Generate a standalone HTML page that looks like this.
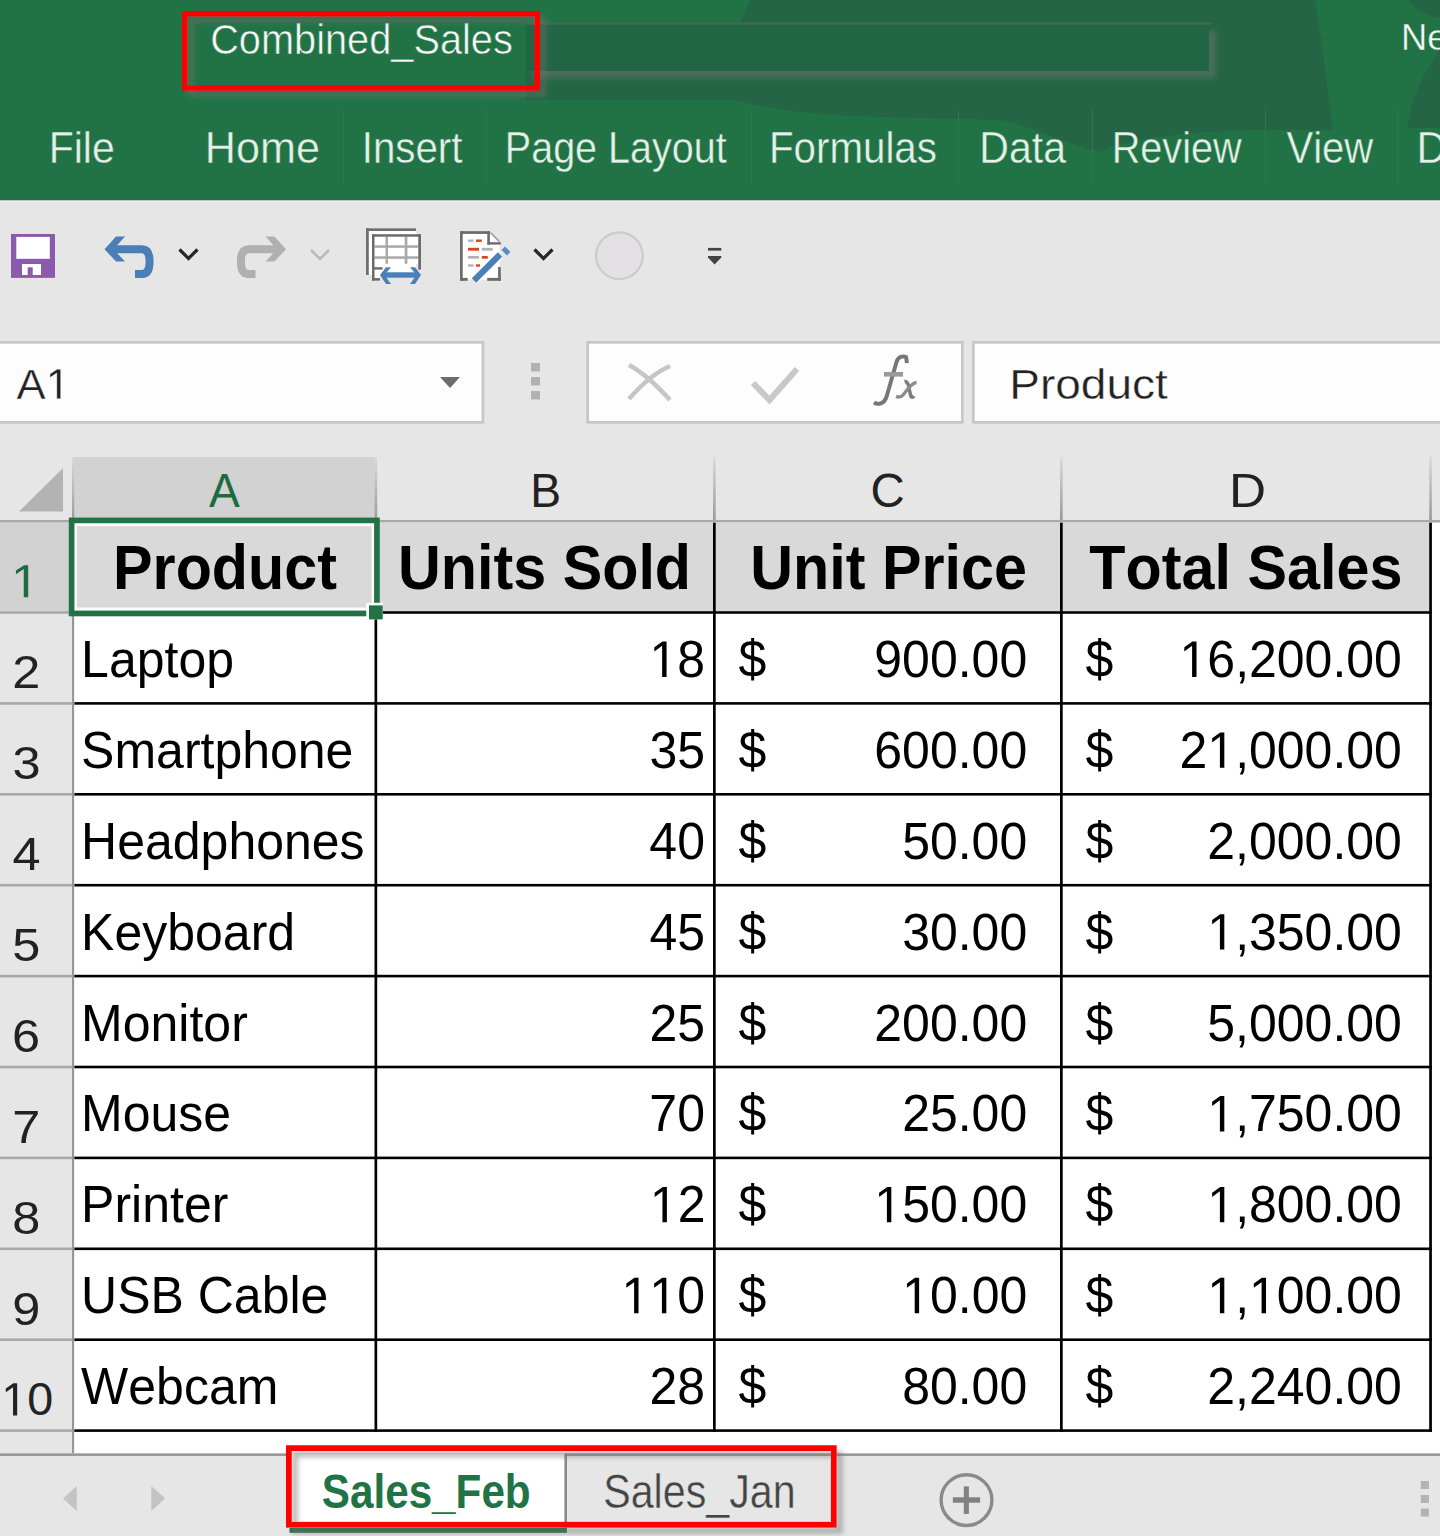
<!DOCTYPE html><html><head><meta charset="utf-8"><title>Combined_Sales - Excel</title><style>html,body{margin:0;padding:0;width:1440px;height:1536px;overflow:hidden;background:#e6e6e6}svg{display:block}text{font-family:"Liberation Sans",sans-serif;font-kerning:none;white-space:pre}</style></head><body>
<svg width="1440" height="1536" viewBox="0 0 1440 1536">
<defs>
<filter id="sh" x="-10%" y="-30%" width="130%" height="180%"><feGaussianBlur in="SourceAlpha" stdDeviation="2.8"/><feOffset dx="6" dy="6" result="b"/><feFlood flood-color="#707070" flood-opacity="0.5"/><feComposite in2="b" operator="in"/><feMerge><feMergeNode/><feMergeNode in="SourceGraphic"/></feMerge></filter>
<filter id="sh2" x="-10%" y="-30%" width="130%" height="180%"><feGaussianBlur in="SourceAlpha" stdDeviation="3.2"/><feOffset dx="7" dy="7" result="b"/><feFlood flood-color="#7a7a7a" flood-opacity="0.45"/><feComposite in2="b" operator="in"/><feMerge><feMergeNode/><feMergeNode in="SourceGraphic"/></feMerge></filter>
<linearGradient id="colsep" x1="0" y1="0" x2="0" y2="1"><stop offset="0" stop-color="#dadada"/><stop offset="1" stop-color="#9a9a9a"/></linearGradient>
</defs>
<rect x="0.00" y="0.00" width="1440.00" height="200.50" fill="#217346"/>
<path d="M526 22 L740 22 C745 10 748 5 750 0 L1315 0 C1322 40 1327 90 1333 130 L1250 130 C1180 132 1120 140 1100 152 C1060 142 1030 125 1000 120 C950 118 850 118 800 112 C770 108 750 104 734 100 L526 100 Z" fill="#236544"/>
<path d="M1440 50 C1425 70 1410 100 1408 128 L1440 128 Z" fill="#236544"/>
<path d="M1408 0 L1440 0 L1440 18 C1425 15 1412 8 1408 0 Z" fill="#236544"/>
<g filter="url(#sh2)"><rect x="526" y="23.5" width="683" height="47.5" fill="#236544"/></g>
<rect x="526.00" y="22.30" width="686.00" height="2.60" fill="#3f6a53"/>
<rect x="0.00" y="200.50" width="1440.00" height="1.50" fill="#ece8ea"/>
<text transform="translate(210.18 54.20) scale(0.9237 1)" font-size="43.02" fill="#f7f9f8" stroke="#217346" stroke-width="0.6">Combined_Sales</text>
<text transform="translate(1401.02 50.00) scale(1.0000 1)" font-size="36.34" fill="#f7f9f8" stroke="#217346" stroke-width="0.35">Ne</text>
<text transform="translate(48.63 162.60) scale(0.9297 1)" font-size="44.19" fill="#e4f0e8" stroke="#217346" stroke-width="0.4">File</text>
<text transform="translate(204.76 162.60) scale(0.9770 1)" font-size="44.19" fill="#e4f0e8" stroke="#217346" stroke-width="0.4">Home</text>
<text transform="translate(361.68 162.60) scale(0.9123 1)" font-size="44.19" fill="#e4f0e8" stroke="#217346" stroke-width="0.4">Insert</text>
<text transform="translate(504.76 162.60) scale(0.8952 1)" font-size="44.19" fill="#e4f0e8" stroke="#217346" stroke-width="0.4">Page Layout</text>
<text transform="translate(768.99 162.60) scale(0.9121 1)" font-size="44.19" fill="#e4f0e8" stroke="#217346" stroke-width="0.4">Formulas</text>
<text transform="translate(979.33 162.60) scale(0.9285 1)" font-size="44.19" fill="#e4f0e8" stroke="#217346" stroke-width="0.4">Data</text>
<text transform="translate(1111.75 162.60) scale(0.8963 1)" font-size="44.19" fill="#e4f0e8" stroke="#217346" stroke-width="0.4">Review</text>
<text transform="translate(1286.52 162.60) scale(0.9050 1)" font-size="44.19" fill="#e4f0e8" stroke="#217346" stroke-width="0.4">View</text>
<text transform="translate(1416.56 162.60) scale(0.9500 1)" font-size="44.19" fill="#e4f0e8" stroke="#217346" stroke-width="0.4">D</text>
<rect x="343.00" y="110.00" width="1.00" height="75.00" fill="#2a7a4f"/>
<rect x="486.00" y="110.00" width="1.00" height="75.00" fill="#2a7a4f"/>
<rect x="751.00" y="110.00" width="1.00" height="75.00" fill="#2a7a4f"/>
<rect x="958.00" y="110.00" width="1.00" height="75.00" fill="#2a7a4f"/>
<rect x="1092.00" y="110.00" width="1.00" height="75.00" fill="#2a7a4f"/>
<rect x="1265.00" y="110.00" width="1.00" height="75.00" fill="#2a7a4f"/>
<rect x="1397.00" y="110.00" width="1.00" height="75.00" fill="#2a7a4f"/>
<g filter="url(#sh)"><rect x="184.75" y="13.75" width="352.5" height="74.2" fill="none" stroke="#ff0000" stroke-width="5.6"/></g>
<rect x="0.00" y="202.00" width="1440.00" height="255.00" fill="#e6e6e6"/>
<g id="qat">
<!-- save -->
<rect x="11" y="234" width="44" height="43.9" fill="#8b5aad"/>
<rect x="16.3" y="236.9" width="33.5" height="21.9" fill="#ffffff"/>
<rect x="22" y="264" width="19" height="11" fill="#ffffff"/>
<rect x="27.7" y="267.3" width="5" height="7.7" fill="#8b5aad"/>
<!-- undo -->
<g id="undo" fill="#4a7fb8">
<path d="M116 236.5 L125 236.5 L113.5 249.2 L125 261.5 L116 261.5 L104.5 249.2 Z"/>
<path d="M108 249.2 L142 249.2 C147.5 249.2 149.6 253.5 149.6 261.5 C149.6 269.5 147.5 274 142 274 L135 274" fill="none" stroke="#4a7fb8" stroke-width="8"/>
</g>
<path d="M179.5 249.5 L188.5 258.5 L197.5 249.5" fill="none" stroke="#262626" stroke-width="3.2"/>
<!-- redo -->
<g transform="translate(390.5 0) scale(-1 1)" fill="#b0b0b0">
<path d="M116 236.5 L125 236.5 L113.5 249.2 L125 261.5 L116 261.5 L104.5 249.2 Z"/>
<path d="M108 249.2 L142 249.2 C147.5 249.2 149.6 253.5 149.6 261.5 C149.6 269.5 147.5 274 142 274 L135 274" fill="none" stroke="#b0b0b0" stroke-width="8"/>
</g>
<path d="M311 250 L320 259 L329 250" fill="none" stroke="#b9b9b9" stroke-width="2.5"/>
<!-- table icon -->
<rect x="366" y="228.3" width="50" height="47" fill="#ffffff"/>
<rect x="366" y="228.3" width="50" height="2.7" fill="#707070"/>
<rect x="366" y="228.3" width="2.8" height="46.7" fill="#707070"/>
<rect x="368.8" y="275" width="3.2" height="3" fill="#e6e6e6"/>
<rect x="374.5" y="236.6" width="43.8" height="27.4" fill="#ffffff"/>
<rect x="374.5" y="264" width="10.5" height="3.2" fill="#ffffff"/>
<rect x="374.5" y="269.6" width="5.5" height="8.5" fill="#ffffff"/>
<rect x="374.5" y="245.3" width="43.8" height="2.5" fill="#a9a9a9"/>
<rect x="374.5" y="256.3" width="43.8" height="2.5" fill="#a9a9a9"/>
<rect x="385.5" y="236.6" width="2.5" height="27.2" fill="#a9a9a9"/>
<rect x="404.7" y="236.6" width="2.7" height="27.2" fill="#a9a9a9"/>
<g fill="#6b6b6b">
<rect x="372" y="234.2" width="49" height="2.5"/>
<rect x="372" y="234.2" width="2.5" height="46.4"/>
<rect x="418.3" y="234.2" width="2.7" height="35.4"/>
<rect x="372" y="267.2" width="10.6" height="2.4"/>
<rect x="372" y="278.1" width="8" height="2.5"/>
</g>
<g fill="#4a7fb8">
<rect x="382" y="272.3" width="37" height="5.4"/>
<path d="M380 275 L386 267.2 L391 267.2 L384.5 275 L391 283.9 L386 283.9 Z"/>
<path transform="translate(801 0) scale(-1 1)" d="M380 275 L386 267.2 L391 267.2 L384.5 275 L391 283.9 L386 283.9 Z"/>
</g>
<!-- doc + pencil -->
<path d="M461.3 232.5 L488.6 232.5 L499.5 243.4 L499.5 279.5 L461.3 279.5 Z" fill="#ffffff"/>
<g fill="#6b6b6b">
<rect x="460" y="231.2" width="29.9" height="2.7"/>
<rect x="460" y="231.2" width="2.7" height="49.6"/>
<rect x="487.3" y="231.2" width="2.6" height="13.4"/>
<rect x="487.3" y="242.2" width="13.5" height="2.4"/>
<rect x="498.1" y="267" width="2.7" height="13.8"/>
<rect x="460" y="277.9" width="7.7" height="2.9"/>
<rect x="487.2" y="277.9" width="13.6" height="2.9"/>
</g>
<path d="M490.5 232.5 L499.5 241.5" stroke="#9a9a9a" stroke-width="1.4"/>
<g fill="#b3b3b3">
<rect x="468" y="239.5" width="5.6" height="2.4"/>
<rect x="481.8" y="247.8" width="11" height="2.9"/>
<rect x="468" y="256" width="11" height="2.7"/>
<rect x="468" y="264.3" width="5.6" height="2.4"/>
</g>
<g fill="#d9461e">
<rect x="476" y="239.5" width="5.8" height="2.4"/>
<rect x="468" y="247.8" width="11" height="2.9"/>
<rect x="481.8" y="256" width="6" height="2.7"/>
<rect x="476" y="264.3" width="4" height="2.4"/>
</g>
<path d="M474 280.5 L500 254.5" stroke="#ffffff" stroke-width="9" opacity="0.85"/>
<path d="M474 280.5 L500 254.5" stroke="#4a7fb8" stroke-width="6.2"/>
<path d="M501.5 250 L507 255.5 L510.5 252 L505 246.5 Z" fill="#5a8bc2"/>
<path d="M534.5 249.5 L543.5 258.5 L552.5 249.5" fill="none" stroke="#262626" stroke-width="3.2"/>
<!-- circle -->
<circle cx="619.4" cy="255.7" r="23.4" fill="#e4e0e3" stroke="#cbcbcb" stroke-width="2.2"/>
<!-- customize -->
<rect x="708" y="247.9" width="13.3" height="2.7" fill="#444"/>
<path d="M708 256 L721.3 256 L721.3 257.5 L714.6 264.5 L708 257.5 Z" fill="#444"/>
</g>

<rect x="-5.00" y="342.35" width="487.90" height="80.00" fill="#fdfdfd" stroke="#c6c6c6" stroke-width="2.7"/>
<g transform="translate(16.61 398.70) scale(1.0240 1)" fill="#222" stroke="#fdfdfd" stroke-width="0.4"><text x="0.00" font-size="42.73">A</text><path transform="translate(28.50 0) scale(0.02087 -0.02087)" stroke-width="19.2" d="M515 0V1237L197 1010V1180L530 1409H696V0Z"/></g>
<path d="M440 377 L460 377 L450 388 Z" fill="#6d6d6d"/>
<rect x="531.00" y="363.00" width="9.00" height="8.50" fill="#b1b1b1"/>
<rect x="531.00" y="377.00" width="9.00" height="8.50" fill="#b1b1b1"/>
<rect x="531.00" y="391.00" width="9.00" height="8.50" fill="#b1b1b1"/>
<rect x="587.70" y="342.35" width="374.60" height="80.00" fill="#fdfdfd" stroke="#c6c6c6" stroke-width="2.7"/>
<rect x="973.35" y="342.35" width="600.00" height="80.00" fill="#fdfdfd" stroke="#c6c6c6" stroke-width="2.7"/>
<text transform="translate(1009.22 398.70) scale(1.0697 1)" font-size="43.02" fill="#222" stroke="#fdfdfd" stroke-width="0.4">Product</text>
<g id="fxbtns">
<path d="M629 365 C640 371 652 380 670 400 M670 366 C656 372 642 384 629 399" fill="none" stroke="#c6c6c6" stroke-width="4.6"/>
<path d="M753 383 L769.5 400 L797 369" fill="none" stroke="#c8c8c8" stroke-width="6"/>
</g>

<path d="M874 402.5 C878 405 884 404 886.5 397 L896.5 362 C898 357 902 355.5 906 357 L907 363" fill="none" stroke="#777777" stroke-width="4"/>
<rect x="884.00" y="372.00" width="19.00" height="4.60" fill="#9a9a9a"/>
<path d="M904.5 381.5 C907 381 908.5 384 909 388 L910.5 395 C911 398 913 397.5 914 396" fill="none" stroke="#7c7c7c" stroke-width="3.5"/>
<path d="M916.5 382.5 C913 383 910 386 907 390 L903 395 C901 397.5 899 397.5 896 396.5" fill="none" stroke="#8c8c8c" stroke-width="3.3"/>
<rect x="0.00" y="457.00" width="1440.00" height="63.00" fill="#e6e6e6"/>
<rect x="74.20" y="457.00" width="300.30" height="63.00" fill="#d2d2d2"/>
<path d="M63 468 L63 511.6 L19 511.6 Z" fill="#b3b3b3"/>
<rect x="374.50" y="457.00" width="2.70" height="63.00" fill="url(#colsep)"/>
<rect x="713.00" y="457.00" width="2.70" height="63.00" fill="url(#colsep)"/>
<rect x="1060.00" y="457.00" width="2.70" height="63.00" fill="url(#colsep)"/>
<rect x="1429.20" y="457.00" width="2.70" height="63.00" fill="url(#colsep)"/>
<rect x="72.00" y="457.00" width="2.30" height="63.00" fill="url(#colsep)"/>
<rect x="0.00" y="520.00" width="1440.00" height="2.70" fill="#a9a9a9"/>
<rect x="0.00" y="522.70" width="72.00" height="930.70" fill="#e6e6e6"/>
<rect x="0.00" y="522.70" width="72.00" height="88.50" fill="#d2d2d2"/>
<rect x="0.00" y="611.20" width="72.00" height="2.60" fill="#a8a8a8"/>
<rect x="0.00" y="702.10" width="72.00" height="2.60" fill="#a8a8a8"/>
<rect x="0.00" y="793.00" width="72.00" height="2.60" fill="#a8a8a8"/>
<rect x="0.00" y="883.90" width="72.00" height="2.60" fill="#a8a8a8"/>
<rect x="0.00" y="974.80" width="72.00" height="2.60" fill="#a8a8a8"/>
<rect x="0.00" y="1065.70" width="72.00" height="2.60" fill="#a8a8a8"/>
<rect x="0.00" y="1156.60" width="72.00" height="2.60" fill="#a8a8a8"/>
<rect x="0.00" y="1247.50" width="72.00" height="2.60" fill="#a8a8a8"/>
<rect x="0.00" y="1338.40" width="72.00" height="2.60" fill="#a8a8a8"/>
<rect x="0.00" y="1429.30" width="72.00" height="2.60" fill="#a8a8a8"/>
<rect x="72.00" y="522.70" width="2.30" height="930.70" fill="#969696"/>
<rect x="74.30" y="522.70" width="1365.70" height="930.70" fill="#ffffff"/>
<rect x="74.30" y="522.70" width="1354.90" height="88.50" fill="#d9d9d9"/>
<rect x="74.30" y="611.20" width="1357.60" height="2.60" fill="#000"/>
<rect x="74.30" y="702.10" width="1357.60" height="2.60" fill="#000"/>
<rect x="74.30" y="793.00" width="1357.60" height="2.60" fill="#000"/>
<rect x="74.30" y="883.90" width="1357.60" height="2.60" fill="#000"/>
<rect x="74.30" y="974.80" width="1357.60" height="2.60" fill="#000"/>
<rect x="74.30" y="1065.70" width="1357.60" height="2.60" fill="#000"/>
<rect x="74.30" y="1156.60" width="1357.60" height="2.60" fill="#000"/>
<rect x="74.30" y="1247.50" width="1357.60" height="2.60" fill="#000"/>
<rect x="74.30" y="1338.40" width="1357.60" height="2.60" fill="#000"/>
<rect x="74.30" y="1429.30" width="1357.60" height="2.60" fill="#000"/>
<rect x="374.50" y="522.70" width="2.70" height="909.20" fill="#000"/>
<rect x="713.00" y="522.70" width="2.70" height="909.20" fill="#000"/>
<rect x="1060.00" y="522.70" width="2.70" height="909.20" fill="#000"/>
<rect x="1429.20" y="522.70" width="2.70" height="909.20" fill="#000"/>
<text transform="translate(208.91 506.70) scale(0.9563 1)" font-size="48.26" fill="#1e6b40">A</text>
<text transform="translate(530.21 506.70) scale(0.9578 1)" font-size="48.26" fill="#222">B</text>
<text transform="translate(870.59 506.70) scale(0.9816 1)" font-size="48.26" fill="#222">C</text>
<text transform="translate(1229.09 506.70) scale(1.0636 1)" font-size="48.26" fill="#222">D</text>
<g transform="translate(11.08 597.30) scale(1.0800 1)" fill="#1e6b40"><path transform="translate(0.00 0) scale(0.02280 -0.02280)" d="M515 0V1237L197 1010V1180L530 1409H696V0Z"/></g>
<text transform="translate(12.28 688.20) scale(1.0800 1)" font-size="46.69" fill="#222">2</text>
<text transform="translate(12.43 779.10) scale(1.0800 1)" font-size="46.69" fill="#222">3</text>
<text transform="translate(12.44 870.00) scale(1.0800 1)" font-size="46.69" fill="#222">4</text>
<text transform="translate(12.33 960.90) scale(1.0800 1)" font-size="46.69" fill="#222">5</text>
<text transform="translate(12.11 1051.80) scale(1.0800 1)" font-size="46.69" fill="#222">6</text>
<text transform="translate(12.25 1142.70) scale(1.0800 1)" font-size="46.69" fill="#222">7</text>
<text transform="translate(12.28 1233.60) scale(1.0800 1)" font-size="46.69" fill="#222">8</text>
<text transform="translate(12.29 1324.50) scale(1.0800 1)" font-size="46.69" fill="#222">9</text>
<g transform="translate(1.30 1415.40) scale(1.0000 1)" fill="#222"><path transform="translate(0.00 0) scale(0.02280 -0.02280)" d="M515 0V1237L197 1010V1180L530 1409H696V0Z"/><text x="25.97" font-size="46.69">0</text></g>
<text transform="translate(113.03 588.90) scale(0.9357 1)" font-size="63.37" fill="#000" font-weight="bold">Product</text>
<text transform="translate(397.94 588.90) scale(0.9357 1)" font-size="63.37" fill="#000" font-weight="bold">Units Sold</text>
<text transform="translate(750.24 588.90) scale(0.9357 1)" font-size="63.37" fill="#000" font-weight="bold">Unit Price</text>
<text transform="translate(1089.33 588.90) scale(0.9357 1)" font-size="63.37" fill="#000" font-weight="bold">Total Sales</text>
<text transform="translate(81.10 676.90) scale(0.9718 1)" font-size="51.45" fill="#000">Laptop</text>
<g transform="translate(649.56 676.90) scale(0.9718 1)" fill="#000"><path transform="translate(0.00 0) scale(0.02512 -0.02512)" d="M515 0V1237L197 1010V1180L530 1409H696V0Z"/><text x="28.62" font-size="51.45">8</text></g>
<text transform="translate(738.46 676.90) scale(0.9718 1)" font-size="51.45" fill="#000">$</text>
<text transform="translate(874.32 676.90) scale(0.9718 1)" font-size="51.45" fill="#000">900.00</text>
<text transform="translate(1085.46 676.90) scale(0.9718 1)" font-size="51.45" fill="#000">$</text>
<g transform="translate(1179.52 676.90) scale(0.9718 1)" fill="#000"><path transform="translate(0.00 0) scale(0.02512 -0.02512)" d="M515 0V1237L197 1010V1180L530 1409H696V0Z"/><text x="28.62" font-size="51.45">6,200.00</text></g>
<text transform="translate(81.10 767.80) scale(0.9718 1)" font-size="51.45" fill="#000">Smartphone</text>
<text transform="translate(649.48 767.80) scale(0.9718 1)" font-size="51.45" fill="#000">35</text>
<text transform="translate(738.46 767.80) scale(0.9718 1)" font-size="51.45" fill="#000">$</text>
<text transform="translate(874.32 767.80) scale(0.9718 1)" font-size="51.45" fill="#000">600.00</text>
<text transform="translate(1085.46 767.80) scale(0.9718 1)" font-size="51.45" fill="#000">$</text>
<g transform="translate(1179.52 767.80) scale(0.9718 1)" fill="#000"><text x="0.00" font-size="51.45">2</text><path transform="translate(28.62 0) scale(0.02512 -0.02512)" d="M515 0V1237L197 1010V1180L530 1409H696V0Z"/><text x="57.23" font-size="51.45">,000.00</text></g>
<text transform="translate(81.10 858.70) scale(0.9718 1)" font-size="51.45" fill="#000">Headphones</text>
<text transform="translate(649.34 858.70) scale(0.9718 1)" font-size="51.45" fill="#000">40</text>
<text transform="translate(738.46 858.70) scale(0.9718 1)" font-size="51.45" fill="#000">$</text>
<text transform="translate(902.13 858.70) scale(0.9718 1)" font-size="51.45" fill="#000">50.00</text>
<text transform="translate(1085.46 858.70) scale(0.9718 1)" font-size="51.45" fill="#000">$</text>
<text transform="translate(1207.32 858.70) scale(0.9718 1)" font-size="51.45" fill="#000">2,000.00</text>
<text transform="translate(81.10 949.60) scale(0.9718 1)" font-size="51.45" fill="#000">Keyboard</text>
<text transform="translate(649.48 949.60) scale(0.9718 1)" font-size="51.45" fill="#000">45</text>
<text transform="translate(738.46 949.60) scale(0.9718 1)" font-size="51.45" fill="#000">$</text>
<text transform="translate(902.13 949.60) scale(0.9718 1)" font-size="51.45" fill="#000">30.00</text>
<text transform="translate(1085.46 949.60) scale(0.9718 1)" font-size="51.45" fill="#000">$</text>
<g transform="translate(1207.32 949.60) scale(0.9718 1)" fill="#000"><path transform="translate(0.00 0) scale(0.02512 -0.02512)" d="M515 0V1237L197 1010V1180L530 1409H696V0Z"/><text x="28.62" font-size="51.45">,350.00</text></g>
<text transform="translate(81.10 1040.50) scale(0.9718 1)" font-size="51.45" fill="#000">Monitor</text>
<text transform="translate(649.48 1040.50) scale(0.9718 1)" font-size="51.45" fill="#000">25</text>
<text transform="translate(738.46 1040.50) scale(0.9718 1)" font-size="51.45" fill="#000">$</text>
<text transform="translate(874.32 1040.50) scale(0.9718 1)" font-size="51.45" fill="#000">200.00</text>
<text transform="translate(1085.46 1040.50) scale(0.9718 1)" font-size="51.45" fill="#000">$</text>
<text transform="translate(1207.32 1040.50) scale(0.9718 1)" font-size="51.45" fill="#000">5,000.00</text>
<text transform="translate(81.10 1131.40) scale(0.9718 1)" font-size="51.45" fill="#000">Mouse</text>
<text transform="translate(649.34 1131.40) scale(0.9718 1)" font-size="51.45" fill="#000">70</text>
<text transform="translate(738.46 1131.40) scale(0.9718 1)" font-size="51.45" fill="#000">$</text>
<text transform="translate(902.13 1131.40) scale(0.9718 1)" font-size="51.45" fill="#000">25.00</text>
<text transform="translate(1085.46 1131.40) scale(0.9718 1)" font-size="51.45" fill="#000">$</text>
<g transform="translate(1207.32 1131.40) scale(0.9718 1)" fill="#000"><path transform="translate(0.00 0) scale(0.02512 -0.02512)" d="M515 0V1237L197 1010V1180L530 1409H696V0Z"/><text x="28.62" font-size="51.45">,750.00</text></g>
<text transform="translate(81.10 1222.30) scale(0.9718 1)" font-size="51.45" fill="#000">Printer</text>
<g transform="translate(649.90 1222.30) scale(0.9718 1)" fill="#000"><path transform="translate(0.00 0) scale(0.02512 -0.02512)" d="M515 0V1237L197 1010V1180L530 1409H696V0Z"/><text x="28.62" font-size="51.45">2</text></g>
<text transform="translate(738.46 1222.30) scale(0.9718 1)" font-size="51.45" fill="#000">$</text>
<g transform="translate(874.32 1222.30) scale(0.9718 1)" fill="#000"><path transform="translate(0.00 0) scale(0.02512 -0.02512)" d="M515 0V1237L197 1010V1180L530 1409H696V0Z"/><text x="28.62" font-size="51.45">50.00</text></g>
<text transform="translate(1085.46 1222.30) scale(0.9718 1)" font-size="51.45" fill="#000">$</text>
<g transform="translate(1207.32 1222.30) scale(0.9718 1)" fill="#000"><path transform="translate(0.00 0) scale(0.02512 -0.02512)" d="M515 0V1237L197 1010V1180L530 1409H696V0Z"/><text x="28.62" font-size="51.45">,800.00</text></g>
<text transform="translate(81.10 1313.20) scale(0.9718 1)" font-size="51.45" fill="#000">USB Cable</text>
<g transform="translate(621.53 1313.20) scale(0.9718 1)" fill="#000"><path transform="translate(0.00 0) scale(0.02512 -0.02512)" d="M515 0V1237L197 1010V1180L530 1409H696V0Z"/><path transform="translate(28.62 0) scale(0.02512 -0.02512)" d="M515 0V1237L197 1010V1180L530 1409H696V0Z"/><text x="57.23" font-size="51.45">0</text></g>
<text transform="translate(738.46 1313.20) scale(0.9718 1)" font-size="51.45" fill="#000">$</text>
<g transform="translate(902.13 1313.20) scale(0.9718 1)" fill="#000"><path transform="translate(0.00 0) scale(0.02512 -0.02512)" d="M515 0V1237L197 1010V1180L530 1409H696V0Z"/><text x="28.62" font-size="51.45">0.00</text></g>
<text transform="translate(1085.46 1313.20) scale(0.9718 1)" font-size="51.45" fill="#000">$</text>
<g transform="translate(1207.32 1313.20) scale(0.9718 1)" fill="#000"><path transform="translate(0.00 0) scale(0.02512 -0.02512)" d="M515 0V1237L197 1010V1180L530 1409H696V0Z"/><text x="28.62" font-size="51.45">,</text><path transform="translate(42.91 0) scale(0.02512 -0.02512)" d="M515 0V1237L197 1010V1180L530 1409H696V0Z"/><text x="71.53" font-size="51.45">00.00</text></g>
<text transform="translate(81.10 1404.10) scale(0.9718 1)" font-size="51.45" fill="#000">Webcam</text>
<text transform="translate(649.56 1404.10) scale(0.9718 1)" font-size="51.45" fill="#000">28</text>
<text transform="translate(738.46 1404.10) scale(0.9718 1)" font-size="51.45" fill="#000">$</text>
<text transform="translate(902.13 1404.10) scale(0.9718 1)" font-size="51.45" fill="#000">80.00</text>
<text transform="translate(1085.46 1404.10) scale(0.9718 1)" font-size="51.45" fill="#000">$</text>
<text transform="translate(1207.32 1404.10) scale(0.9718 1)" font-size="51.45" fill="#000">2,240.00</text>
<rect x="75.65" y="524.65" width="297.35" height="84.3" fill="none" stroke="#ffffff" stroke-width="2.8"/>
<rect x="71.6" y="520.4" width="305.4" height="93.1" fill="none" stroke="#217346" stroke-width="5.6"/>
<rect x="366.30" y="602.80" width="16.40" height="16.60" fill="#ffffff"/>
<rect x="369.00" y="605.40" width="13.70" height="14.00" fill="#217346"/>
<rect x="0.00" y="1453.40" width="1440.00" height="82.60" fill="#e6e6e6"/>
<rect x="0.00" y="1453.40" width="1440.00" height="2.60" fill="#999999"/>
<path d="M76.8 1486 L76.8 1511 L63 1498.5 Z" fill="#c3c3c3"/>
<path d="M151.3 1486 L151.3 1511 L165.2 1498.5 Z" fill="#c3c3c3"/>
<rect x="289.50" y="1453.40" width="277.00" height="74.40" fill="#ffffff"/>
<rect x="289.50" y="1527.80" width="277.40" height="5.00" fill="#217346"/>
<rect x="564.40" y="1453.40" width="2.60" height="74.40" fill="#8a8a8a"/>
<text transform="translate(321.78 1508.00) scale(0.8752 1)" font-size="48.26" fill="#217346" font-weight="bold">Sales_Feb</text>
<text transform="translate(603.13 1508.00) scale(0.8596 1)" font-size="47.97" fill="#444444" stroke="#e6e6e6" stroke-width="0.4">Sales_Jan</text>
<circle cx="966.5" cy="1500.1" r="25.4" fill="none" stroke="#8a8a8a" stroke-width="3.4"/>
<rect x="952.80" y="1497.30" width="27.30" height="5.40" fill="#808080"/>
<rect x="963.80" y="1486.40" width="5.10" height="27.50" fill="#808080"/>
<rect x="1420.80" y="1481.00" width="8.20" height="8.00" fill="#b3b3b3"/>
<rect x="1420.80" y="1495.00" width="8.20" height="8.00" fill="#b3b3b3"/>
<rect x="1420.80" y="1508.50" width="8.20" height="8.00" fill="#b3b3b3"/>
<g filter="url(#sh)"><rect x="288.9" y="1448.15" width="544.9" height="76.6" fill="none" stroke="#ff0000" stroke-width="5.8"/></g>
</svg></body></html>
